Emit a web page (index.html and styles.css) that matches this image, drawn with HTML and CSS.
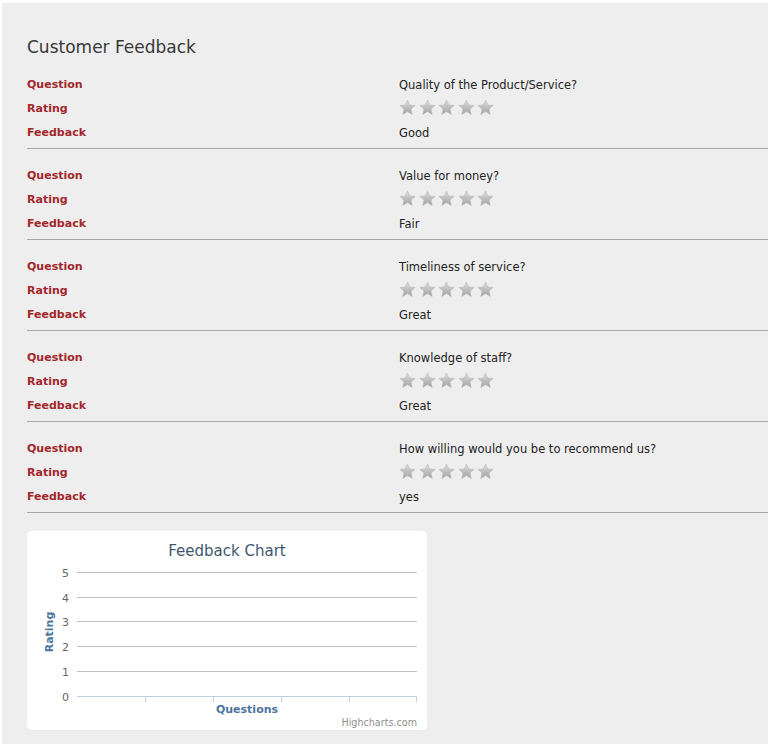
FILE: index.html
```html
<!DOCTYPE html>
<html lang="en">
<head>
    <meta charset="UTF-8">
    <title>Customer Feedback</title>
    <link rel="stylesheet" href="styles.css">
</head>

<body>
    <svg class="defs" width="0" height="0">
        <defs>
            <linearGradient id="starFill" x1="0" y1="0" x2="0" y2="1">
                <stop offset="0" stop-color="#e2e2e2"/>
                <stop offset="0.5" stop-color="#bfbfbf"/>
                <stop offset="1" stop-color="#a4a4a4"/>
            </linearGradient>
            <symbol id="star" viewBox="0 0 20 20">
                <path d="M10 1.2 L12.6 7 L18.9 7.6 L14.1 11.8 L15.5 18.1 L10 14.8 L4.5 18.1 L5.9 11.8 L1.1 7.6 L7.4 7 Z"
                      fill="url(#starFill)" stroke="#b0b0b0" stroke-width="0.6" stroke-linejoin="round"/>
            </symbol>
        </defs>
    </svg>

    <div class="page">
        <h2 class="title">Customer Feedback</h2>

        <div id="entries"></div>

        <div class="chart">
            <svg width="400" height="199" viewBox="0 0 400 199">
                <text class="chart-title" x="200" y="25" text-anchor="middle">Feedback Chart</text>

                <g class="grid">
                    <line x1="50" y1="41.5" x2="390" y2="41.5"/>
                    <line x1="50" y1="66.5" x2="390" y2="66.5"/>
                    <line x1="50" y1="90.5" x2="390" y2="90.5"/>
                    <line x1="50" y1="115.5" x2="390" y2="115.5"/>
                    <line x1="50" y1="140.5" x2="390" y2="140.5"/>
                </g>
                <g class="axis">
                    <line x1="50" y1="165.5" x2="390" y2="165.5"/>
                    <line x1="118.5" y1="165" x2="118.5" y2="171"/>
                    <line x1="186.5" y1="165" x2="186.5" y2="171"/>
                    <line x1="254.5" y1="165" x2="254.5" y2="171"/>
                    <line x1="322.5" y1="165" x2="322.5" y2="171"/>
                    <line x1="389.5" y1="165" x2="389.5" y2="171"/>
                </g>

                <g class="y-labels" text-anchor="end">
                    <text x="42" y="46">5</text>
                    <text x="42" y="71">4</text>
                    <text x="42" y="95">3</text>
                    <text x="42" y="120">2</text>
                    <text x="42" y="145">1</text>
                    <text x="42" y="170">0</text>
                </g>

                <text class="axis-title" x="0" y="0" text-anchor="middle" transform="translate(26 101) rotate(-90)">Rating</text>
                <text class="axis-title" x="220" y="182" text-anchor="middle">Questions</text>
                <text class="credits" x="390" y="195" text-anchor="end">Highcharts.com</text>
            </svg>
        </div>
    </div>

    <script>
        const feedback = [
            { question: 'Quality of the Product/Service?', answer: 'Good' },
            { question: 'Value for money?', answer: 'Fair' },
            { question: 'Timeliness of service?', answer: 'Great' },
            { question: 'Knowledge of staff?', answer: 'Great' },
            { question: 'How willing would you be to recommend us?', answer: 'yes' }
        ];

        const entries = document.getElementById('entries');

        function stars(count) {
            let html = '';
            for (let i = 0; i < count; i++) {
                html += '<svg class="star" width="17" height="17"><use href="#star"/></svg>';
            }
            return html;
        }

        feedback.forEach(function(item) {
            const entry = document.createElement('div');
            entry.className = 'entry';
            entry.innerHTML =
                '<div class="label">Question</div><div class="value">' + item.question + '</div>' +
                '<div class="label">Rating</div><div class="value rating">' + stars(5) + '</div>' +
                '<div class="label">Feedback</div><div class="value">' + item.answer + '</div>';
            entries.appendChild(entry);
        });
    </script>
</body>
</html>
```

FILE: styles.css
```css
* {
    box-sizing: border-box;
}

html,
body {
    background: #ffffff;
}

body {
    margin: 0;
    padding: 0;
    font-family: "DejaVu Sans", Verdana, sans-serif;
    overflow: hidden;
}

.defs {
    position: absolute;
    width: 0;
    height: 0;
}

.page {
    margin: 3px 0 0 2px;
    background: #eeeeee;
    padding: 0 0 14px 25px;
    min-height: 741px;
}

.title {
    margin: 0;
    padding-top: 32px;
    height: 69px;
    font-size: 17px;
    font-weight: normal;
    color: #383838;
    line-height: 24px;
}

.entry {
    display: grid;
    grid-template-columns: 372px 1fr;
    grid-auto-rows: 24px;
    align-items: center;
    padding: 0 0 4px 0;
    border-bottom: 1px solid #a8a8a8;
}

.entry + .entry {
    padding-top: 14px;
}

.label {
    padding-top: 1px;
    font-size: 11px;
    font-weight: bold;
    color: #a3262b;
}

.value {
    padding-top: 1px;
    font-size: 11.5px;
    color: #222222;
}

.rating {
    display: flex;
    gap: 2.5px;
    align-items: center;
    padding-top: 0;
    margin-top: -2px;
}

.star {
    display: block;
}

.chart {
    margin-top: 18px;
    width: 400px;
    height: 199px;
    background: #ffffff;
    border-radius: 5px;
}

.chart svg {
    display: block;
    font-family: "DejaVu Sans", Verdana, sans-serif;
}

.chart-title {
    font-size: 15px;
    fill: #3e576f;
}

.grid line {
    stroke: #c0c0c0;
    stroke-width: 1;
}

.axis line {
    stroke: #c0d0e0;
    stroke-width: 1;
}

.y-labels text {
    font-size: 11px;
    fill: #666666;
}

.axis-title {
    font-size: 11px;
    font-weight: bold;
    fill: #4d759e;
}

.credits {
    font-size: 9.6px;
    fill: #909090;
}
```
